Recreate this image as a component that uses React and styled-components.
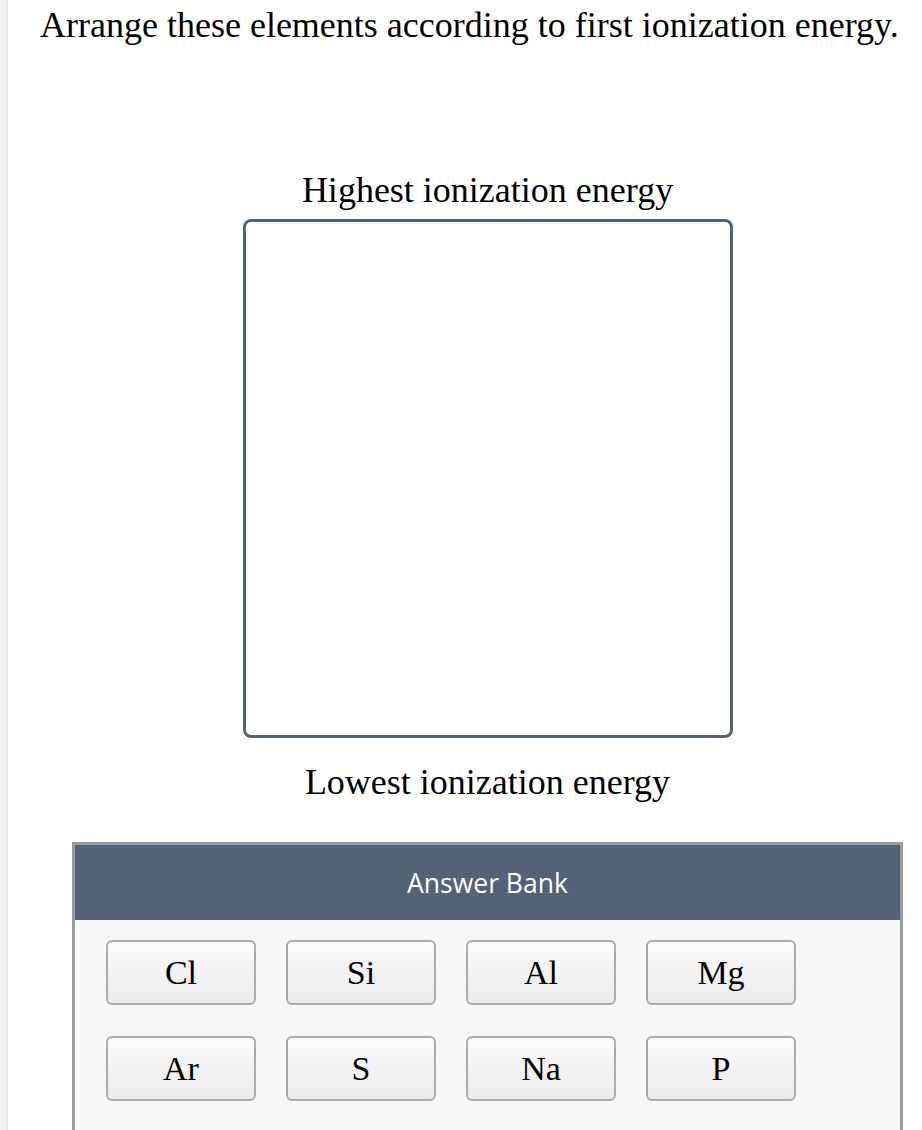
import React from 'react';
import styled, { createGlobalStyle } from 'styled-components';

const GlobalStyle = createGlobalStyle`
  html, body {
    margin: 0;
    padding: 0;
    background: #fff;
  }
  body {
    font-family: "Liberation Serif", "Times New Roman", serif;
    color: #000;
  }
`;

const Page = styled.div`
  display: flex;
  min-height: 1130px;
`;

const SideRail = styled.div`
  flex: 0 0 8px;
  background: linear-gradient(to right, #f6f6f6, #ececec);
  border-right: 1px solid #e2e2e2;
  box-sizing: border-box;
`;

const Main = styled.div`
  flex: 1;
  display: flex;
  flex-direction: column;
`;

const Prompt = styled.h1`
  margin: 3px 0 0 32px;
  font-size: 36px;
  font-weight: normal;
  line-height: 44px;
  white-space: nowrap;
`;

const Question = styled.div`
  width: 831px;
  margin-left: 64px;
  display: flex;
  flex-direction: column;
  align-items: center;
`;

const RankLabel = styled.div`
  font-size: 36px;
  line-height: 44px;
  margin-top: ${(p) => p.$top}px;
`;

const DropZone = styled.div`
  box-sizing: border-box;
  width: 490px;
  height: 519px;
  margin-top: 7px;
  border: 3px solid #546278;
  border-radius: 8px;
  background: #fff;
`;

const Bank = styled.section`
  align-self: stretch;
  margin-top: 38px;
  border: 3px solid #9b9b9b;
  border-bottom: none;
  background: #f7f7f7;
`;

const BankHeader = styled.div`
  height: 75px;
  background: #546278;
  color: #fff;
  display: flex;
  align-items: center;
  justify-content: center;
  font-family: "Open Sans", "Liberation Sans", sans-serif;
  font-size: 26.5px;
`;

const Chips = styled.div`
  display: grid;
  grid-template-columns: repeat(4, 150px);
  column-gap: 30px;
  row-gap: 31px;
  padding: 20px 0 30px 31px;
`;

const Chip = styled.button`
  box-sizing: border-box;
  height: 65px;
  border: 2px solid #ababab;
  border-radius: 6px;
  background: linear-gradient(to bottom, #fafafa, #ebebeb);
  font-family: "Liberation Serif", "Times New Roman", serif;
  font-size: 34px;
  color: #000;
  padding: 0;
  cursor: grab;
`;

const elements = ['Cl', 'Si', 'Al', 'Mg', 'Ar', 'S', 'Na', 'P'];

export default function App() {
  return (
    <>
      <GlobalStyle />
      <Page>
        <SideRail />
        <Main>
          <Prompt>Arrange these elements according to first ionization energy.</Prompt>
          <Question>
            <RankLabel $top={121}>Highest ionization energy</RankLabel>
            <DropZone />
            <RankLabel $top={22}>Lowest ionization energy</RankLabel>
            <Bank>
              <BankHeader>Answer Bank</BankHeader>
              <Chips>
                {elements.map((el) => (
                  <Chip key={el}>{el}</Chip>
                ))}
              </Chips>
            </Bank>
          </Question>
        </Main>
      </Page>
    </>
  );
}
